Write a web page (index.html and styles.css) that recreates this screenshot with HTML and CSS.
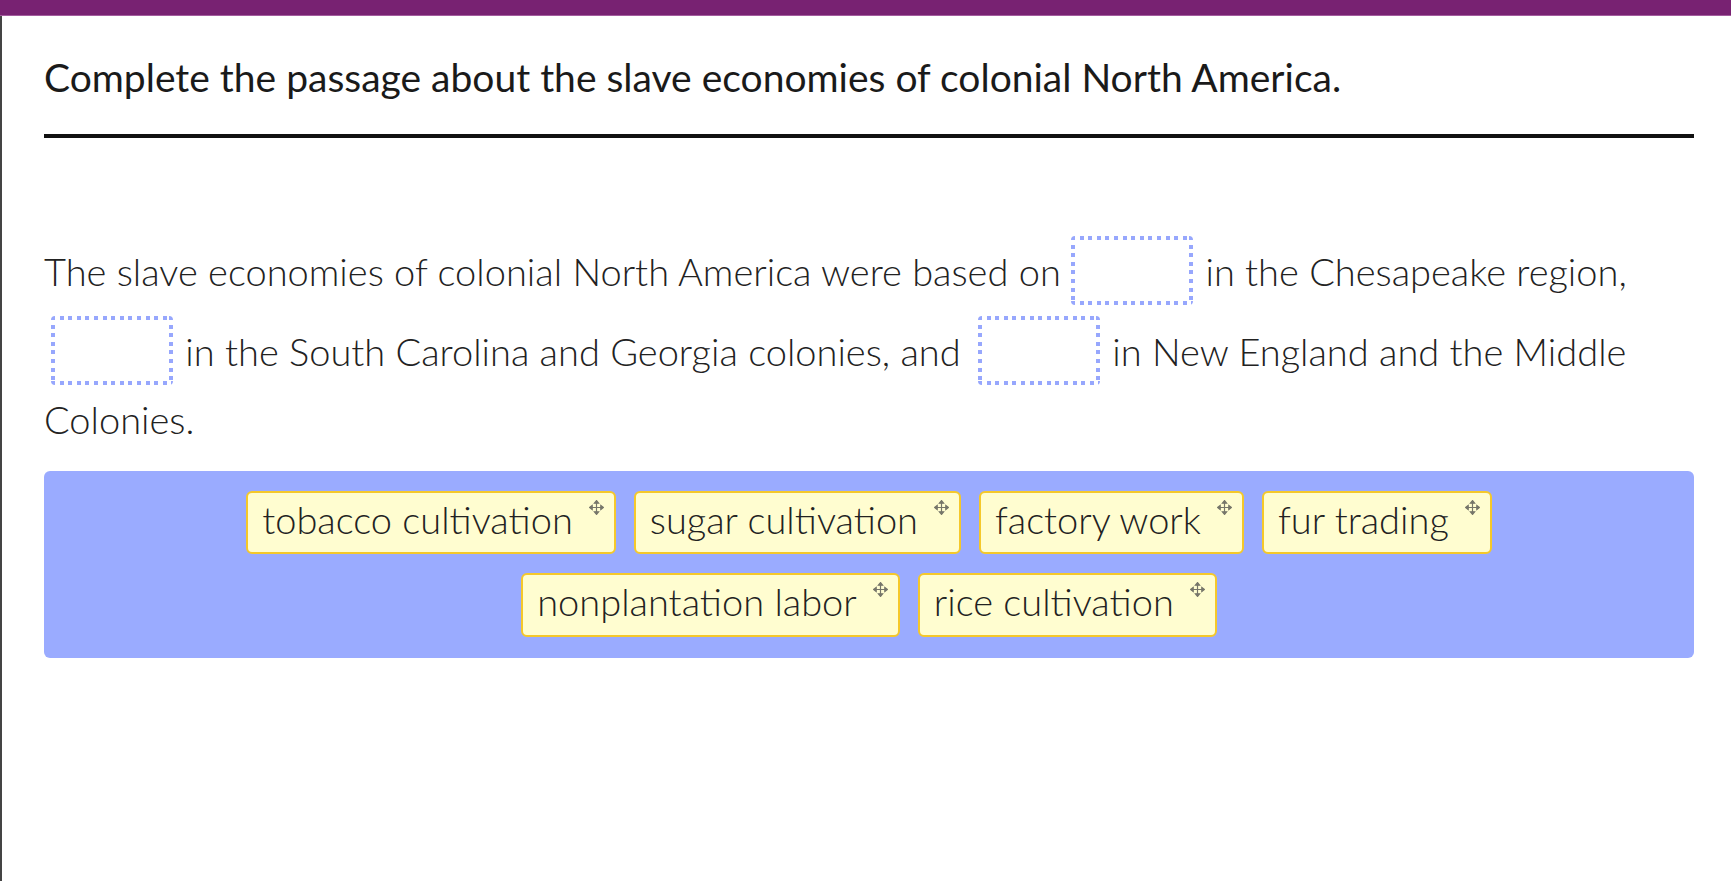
FILE: index.html
```html
<!DOCTYPE html>
<html lang="en">
<head>
    <meta charset="UTF-8">
    <meta name="viewport" content="width=device-width, initial-scale=1.0">
    <title>Complete the passage</title>
    <link rel="stylesheet" href="styles.css">
</head>
<body>
    <div class="top-bar"></div>
    <div class="page">
        <h1 class="prompt">Complete the passage about the slave economies of colonial North America.</h1>

        <p class="passage">
            The slave economies of colonial North America were based on <span class="drop-slot"></span> in the Chesapeake region,
            <span class="drop-slot"></span> in the South Carolina and Georgia colonies, and <span class="drop-slot"></span> in New England and the Middle
            Colonies.
        </p>

        <div class="word-bank">
            <div class="chip"><span>tobacco cultivation</span><svg class="move-icon" viewBox="0 0 14 14"><path d="M7 2.5v9M2.5 7h9"/><polygon points="7,0.5 5,3 9,3"/><polygon points="7,13.5 5,11 9,11"/><polygon points="0.5,7 3,5 3,9"/><polygon points="13.5,7 11,5 11,9"/></svg></div>
            <div class="chip"><span>sugar cultivation</span><svg class="move-icon" viewBox="0 0 14 14"><path d="M7 2.5v9M2.5 7h9"/><polygon points="7,0.5 5,3 9,3"/><polygon points="7,13.5 5,11 9,11"/><polygon points="0.5,7 3,5 3,9"/><polygon points="13.5,7 11,5 11,9"/></svg></div>
            <div class="chip"><span>factory work</span><svg class="move-icon" viewBox="0 0 14 14"><path d="M7 2.5v9M2.5 7h9"/><polygon points="7,0.5 5,3 9,3"/><polygon points="7,13.5 5,11 9,11"/><polygon points="0.5,7 3,5 3,9"/><polygon points="13.5,7 11,5 11,9"/></svg></div>
            <div class="chip"><span>fur trading</span><svg class="move-icon" viewBox="0 0 14 14"><path d="M7 2.5v9M2.5 7h9"/><polygon points="7,0.5 5,3 9,3"/><polygon points="7,13.5 5,11 9,11"/><polygon points="0.5,7 3,5 3,9"/><polygon points="13.5,7 11,5 11,9"/></svg></div>
            <div class="chip"><span>nonplantation labor</span><svg class="move-icon" viewBox="0 0 14 14"><path d="M7 2.5v9M2.5 7h9"/><polygon points="7,0.5 5,3 9,3"/><polygon points="7,13.5 5,11 9,11"/><polygon points="0.5,7 3,5 3,9"/><polygon points="13.5,7 11,5 11,9"/></svg></div>
            <div class="chip"><span>rice cultivation</span><svg class="move-icon" viewBox="0 0 14 14"><path d="M7 2.5v9M2.5 7h9"/><polygon points="7,0.5 5,3 9,3"/><polygon points="7,13.5 5,11 9,11"/><polygon points="0.5,7 3,5 3,9"/><polygon points="13.5,7 11,5 11,9"/></svg></div>
        </div>
    </div>
</body>
</html>
```
FILE: styles.css
```css
* {
    margin: 0;
    padding: 0;
    box-sizing: border-box;
    font-family: 'Lato', sans-serif;
}

body {
    background-color: #fff;
    min-height: 100vh;
    display: flex;
    flex-direction: column;
}

.top-bar {
    height: 16px;
    background-color: #782272;
    border-bottom: 1px solid #a35c9e;
}

.page {
    flex: 1;
    border-left: 2px solid #444;
    padding: 38px 37px 0 42px;
}

.prompt {
    font-size: 39px;
    font-weight: 400;
    line-height: 1.2;
    color: #1a1a1a;
    padding-bottom: 33px;
    border-bottom: 4px solid #111;
}

.passage {
    margin-top: 93px;
    font-size: 38px;
    font-weight: 300;
    line-height: 1.5;
    color: #222;
}

/* square dotted outline, drawn with gradients so the dots stay square */
.drop-slot {
    display: inline-block;
    width: 122px;
    height: 69px;
    margin: 5.5px 2px 5.5px 7px;
    vertical-align: -25.5px;
    border-radius: 4px;
    background:
        repeating-linear-gradient(90deg, #97a7fd 0 4px, transparent 4px 8.6px) top left / 100% 4px no-repeat,
        repeating-linear-gradient(90deg, #97a7fd 0 4px, transparent 4px 8.6px) bottom left / 100% 4px no-repeat,
        repeating-linear-gradient(180deg, #97a7fd 0 4px, transparent 4px 8.6px) top left / 4px 100% no-repeat,
        repeating-linear-gradient(180deg, #97a7fd 0 4px, transparent 4px 8.6px) top right / 4px 100% no-repeat;
}

.drop-slot:first-child {
    margin-left: 0;
}

.word-bank {
    margin-top: 23px;
    background-color: #9aabff;
    border-radius: 6px;
    padding: 20px 100px 21px;
    display: flex;
    flex-wrap: wrap;
    justify-content: center;
    gap: 19px 18px;
}

.chip {
    display: flex;
    align-items: flex-start;
    background-color: #fffdd0;
    border: 2px solid #f5c82a;
    border-radius: 6px;
    padding: 4px 10px 10px 14px;
    font-size: 38px;
    font-weight: 300;
    line-height: 1.2;
    color: #222;
    cursor: move;
}

.move-icon {
    width: 15px;
    height: 15px;
    margin: 3px 0 0 16px;
    fill: #76766a;
    stroke: #76766a;
    stroke-width: 1.1;
}
```
